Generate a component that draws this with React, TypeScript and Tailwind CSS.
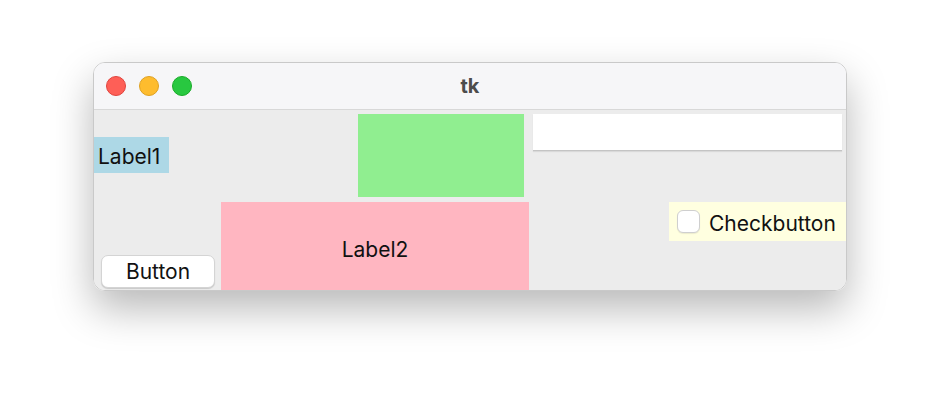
import React from 'react';

const TrafficLights: React.FC = () => (
  <div className="flex items-center gap-[13px]">
    <span className="w-[20px] h-[20px] rounded-full bg-[#fe5f57] border border-[#e0443e]" />
    <span className="w-[20px] h-[20px] rounded-full bg-[#febc2e] border border-[#dea123]" />
    <span className="w-[20px] h-[20px] rounded-full bg-[#28c840] border border-[#1aab29]" />
  </div>
);

const App: React.FC = () => {
  return (
    <div
      className="w-[940px] h-[414px] bg-white pt-[62px] pl-[93px]"
      style={{ fontFamily: 'Inter, "Liberation Sans", sans-serif' }}
    >
      <div className="w-[754px] h-[229px] rounded-[12px] overflow-hidden flex flex-col border border-[#c9c9c9] shadow-[0_18px_40px_rgba(0,0,0,0.28)]">
        {/* Title bar */}
        <div className="h-[47px] shrink-0 bg-[#f6f6f8] border-b border-[#d8d8d8] flex items-center px-[12px]">
          <TrafficLights />
          <span className="flex-1 text-center pr-[86px] text-[20px] font-bold text-[#4c4c4c]">tk</span>
        </div>

        {/* Content */}
        <div className="flex-1 bg-[#ececec] grid grid-cols-[127px_308px_317px] grid-rows-[92px_89px] text-[21px] text-[#111]">
          <div className="self-start mt-[27px] w-[75px] h-[36px] bg-[#add8e6] flex items-center pl-[4px] pt-[4px]">
            Label1
          </div>

          <div className="ml-[137px] mt-[4px] w-[166px] h-[83px] bg-[#90ee90]" />

          <div className="ml-[4px] mt-[4px] w-[309px] h-[37px] bg-white border-b border-[#c4c4c4] shadow-[0_1px_1px_rgba(0,0,0,0.08)]" />

          <div className="self-end ml-[7px] mb-[3px] w-[114px] h-[33px] bg-white rounded-[7px] border border-[#d4d4d4] shadow-[0_1px_1px_rgba(0,0,0,0.15)] flex items-center justify-center">
            Button
          </div>

          <div className="bg-[#ffb6c1] flex items-center justify-center pt-[6px]">Label2</div>

          <div className="justify-self-end self-start w-[177px] h-[39px] bg-[#ffffe0] flex items-center gap-[9px] pl-[8px]">
            <span className="w-[23px] h-[23px] rounded-[6px] bg-white border border-[#cfcfcf] shadow-[0_1px_1px_rgba(0,0,0,0.08)]" />
            <span className="pt-[4px]">Checkbutton</span>
          </div>
        </div>
      </div>
    </div>
  );
};

export default App;
